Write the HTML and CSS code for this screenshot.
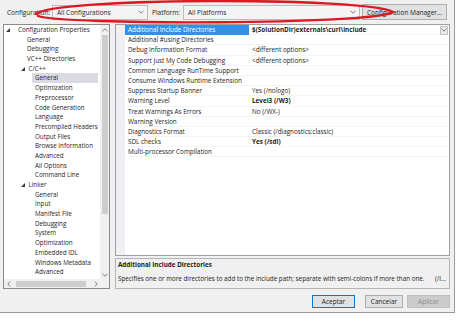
FILE: index.html
```html
<!DOCTYPE html>
<html>
<head>
	<title>Property Pages</title>
	<link rel="stylesheet" href="styles.css">
</head>
<body>
	<div class="dialog">
		<div class="toolbar">
			<span class="label">Configuration:</span>
			<div class="combo combo-config">
				<span>All Configurations</span>
				<svg class="chev" width="6" height="4" viewBox="0 0 6 4"><polyline points="0.5,0.8 3,3.2 5.5,0.8" /></svg>
			</div>
			<span class="label label-platform">Platform:</span>
			<div class="combo combo-platform">
				<span>All Platforms</span>
				<svg class="chev" width="6" height="4" viewBox="0 0 6 4"><polyline points="0.5,0.8 3,3.2 5.5,0.8" /></svg>
			</div>
			<button class="btn btn-manager">Configuration Manager...</button>
		</div>

		<div class="main">
			<div class="tree">
				<ul class="tree-list">
					<li class="lvl0"><svg class="exp" width="4" height="4" viewBox="0 0 4 4"><polygon points="4,0 4,4 0,4" /></svg>Configuration Properties</li>
					<li class="lvl1">General</li>
					<li class="lvl1">Debugging</li>
					<li class="lvl1">VC++ Directories</li>
					<li class="lvl1p"><svg class="exp" width="4" height="4" viewBox="0 0 4 4"><polygon points="4,0 4,4 0,4" /></svg>C/C++</li>
					<li class="lvl2 selected">General</li>
					<li class="lvl2">Optimization</li>
					<li class="lvl2">Preprocessor</li>
					<li class="lvl2">Code Generation</li>
					<li class="lvl2">Language</li>
					<li class="lvl2">Precompiled Headers</li>
					<li class="lvl2">Output Files</li>
					<li class="lvl2">Browse Information</li>
					<li class="lvl2">Advanced</li>
					<li class="lvl2">All Options</li>
					<li class="lvl2">Command Line</li>
					<li class="lvl1p"><svg class="exp" width="4" height="4" viewBox="0 0 4 4"><polygon points="4,0 4,4 0,4" /></svg>Linker</li>
					<li class="lvl2">General</li>
					<li class="lvl2">Input</li>
					<li class="lvl2">Manifest File</li>
					<li class="lvl2">Debugging</li>
					<li class="lvl2">System</li>
					<li class="lvl2">Optimization</li>
					<li class="lvl2">Embedded IDL</li>
					<li class="lvl2">Windows Metadata</li>
					<li class="lvl2">Advanced</li>
				</ul>
				<div class="vscroll">
					<div class="arrow"><svg width="6" height="4" viewBox="0 0 6 4"><polyline points="0.5,3.2 3,0.8 5.5,3.2" /></svg></div>
					<div class="vthumb"></div>
					<div class="spacer"></div>
					<div class="arrow"><svg width="6" height="4" viewBox="0 0 6 4"><polyline points="0.5,0.8 3,3.2 5.5,0.8" /></svg></div>
				</div>
				<div class="hscroll">
					<div class="arrow"><svg width="4" height="6" viewBox="0 0 4 6"><polyline points="3.2,0.5 0.8,3 3.2,5.5" /></svg></div>
					<div class="hthumb"></div>
					<div class="spacer"></div>
					<div class="arrow"><svg width="4" height="6" viewBox="0 0 4 6"><polyline points="0.8,0.5 3.2,3 0.8,5.5" /></svg></div>
				</div>
				<div class="corner"></div>
			</div>

			<div class="right">
				<div class="grid">
					<div class="gutter"></div>
					<div class="rows">
						<div class="row selected">
							<span class="name">Additional Include Directories</span>
							<span class="value bold">$(SolutionDir)externals\curl\include</span>
							<span class="drop"><svg width="6" height="4" viewBox="0 0 6 4"><polyline points="0.5,0.8 3,3.2 5.5,0.8" /></svg></span>
						</div>
						<div class="row"><span class="name">Additional #using Directories</span><span class="value"></span></div>
						<div class="row"><span class="name">Debug Information Format</span><span class="value">&lt;different options&gt;</span></div>
						<div class="row"><span class="name">Support Just My Code Debugging</span><span class="value">&lt;different options&gt;</span></div>
						<div class="row"><span class="name">Common Language RunTime Support</span><span class="value"></span></div>
						<div class="row"><span class="name">Consume Windows Runtime Extension</span><span class="value"></span></div>
						<div class="row"><span class="name">Suppress Startup Banner</span><span class="value">Yes (/nologo)</span></div>
						<div class="row"><span class="name">Warning Level</span><span class="value bold">Level3 (/W3)</span></div>
						<div class="row"><span class="name">Treat Warnings As Errors</span><span class="value">No (/WX-)</span></div>
						<div class="row"><span class="name">Warning Version</span><span class="value"></span></div>
						<div class="row"><span class="name">Diagnostics Format</span><span class="value">Classic (/diagnostics:classic)</span></div>
						<div class="row"><span class="name">SDL checks</span><span class="value bold">Yes (/sdl)</span></div>
						<div class="row"><span class="name">Multi-processor Compilation</span><span class="value"></span></div>
					</div>
				</div>
				<div class="desc">
					<div class="desc-title">Additional Include Directories</div>
					<div class="desc-text">
						<span>Specifies one or more directories to add to the include path; separate with semi-colons if more than one.</span>
						<span>(/I...</span>
					</div>
				</div>
			</div>
		</div>

		<div class="buttons">
			<button class="btn btn-ok">Aceptar</button>
			<button class="btn btn-cancel">Cancelar</button>
			<button class="btn btn-apply" disabled>Aplicar</button>
		</div>

		<svg class="highlight" width="455" height="30" viewBox="0 0 455 30">
			<path d="M36 14 C 55 -3, 370 -3, 393 12 C 375 25, 60 25, 38 16" />
		</svg>
	</div>
</body>
</html>
```

FILE: styles.css
```css
body {
	margin: 0;
	background-color: #fff;
	font-family: "Open Sans", "Noto Sans", sans-serif;
	font-size: 6.5px;
	color: #1e1e1e;
}

.dialog {
	position: relative;
	width: 455px;
	height: 313px;
	box-sizing: border-box;
	background-color: #f0f0f0;
	border-right: 1px solid #9a9a9a;
	border-bottom: 1px solid #9a9a9a;
	display: flex;
	flex-direction: column;
}

/* top bar */
.toolbar {
	height: 24px;
	display: flex;
	align-items: center;
	padding-left: 7px;
}

.label {
	width: 45px;
	white-space: nowrap;
}

.label-platform {
	width: 31px;
	margin-left: 4px;
}

.combo {
	height: 15px;
	box-sizing: border-box;
	display: flex;
	align-items: center;
	justify-content: space-between;
	padding: 0 3px 0 4px;
	background-color: #f4f4f4;
	border: 1px solid #bcbcbc;
}

.combo-config {
	width: 96px;
}

.combo-platform {
	width: 177px;
}

.chev polyline,
.arrow polyline,
.drop polyline {
	fill: none;
	stroke: #707070;
	stroke-width: 0.9;
}

.btn {
	font-family: inherit;
	font-size: 6.5px;
	color: #1e1e1e;
	height: 14px;
	padding: 0;
	background-color: #e1e1e1;
	border: 1px solid #adadad;
}

.btn-manager {
	margin-left: 2px;
	width: 85px;
	height: 16px;
}

/* tree + grid */
.main {
	height: 265px;
	display: flex;
	padding-left: 3px;
}

.tree {
	width: 107px;
	box-sizing: border-box;
	background-color: #fff;
	border: 1px solid #8c8c8c;
	display: grid;
	grid-template-columns: 1fr 9px;
	grid-template-rows: 1fr 9px;
	font-size: 6.25px;
}

.tree-list {
	list-style: none;
	margin: 0;
	padding: 0;
	overflow: hidden;
}

.tree-list li {
	height: 9.7px;
	line-height: 9.7px;
	white-space: nowrap;
}

.exp {
	display: inline-block;
	vertical-align: middle;
	margin-top: -1px;
}

.exp polygon {
	fill: #3a3a3a;
}

.lvl0 {
	padding-left: 2px;
}

.lvl0 .exp {
	margin-right: 8px;
}

.lvl1 {
	padding-left: 23px;
}

.lvl1p {
	padding-left: 16.5px;
}

.lvl1p .exp {
	margin-right: 4px;
}

.lvl2 {
	margin: 0 2px 0 27.5px;
	padding-left: 3.5px;
}

.tree-list .selected {
	background-color: #dadae3;
}

.vscroll {
	background-color: #f0f0f0;
	display: flex;
	flex-direction: column;
}

.hscroll {
	background-color: #f0f0f0;
	display: flex;
}

.arrow {
	height: 9px;
	width: 9px;
	display: flex;
	align-items: center;
	justify-content: center;
}

.vthumb {
	margin: 1px 1.5px 0;
	height: 179px;
	background-color: #cdcdcd;
}

.hthumb {
	margin: 1.5px 0 1.5px 3px;
	width: 70px;
	background-color: #cdcdcd;
}

.spacer {
	flex: 1;
}

.corner {
	background-color: #f0f0f0;
}

.right {
	width: 335px;
	margin-left: 5px;
	display: flex;
	flex-direction: column;
	gap: 2px;
}

.grid {
	height: 232px;
	box-sizing: border-box;
	background-color: #fff;
	border: 1px solid #a0a0a0;
	display: flex;
	font-size: 6.35px;
}

.gutter {
	width: 9px;
	background-color: #eff0f4;
}

.rows {
	flex: 1;
}

.row {
	height: 10.2px;
	line-height: 10.2px;
	display: flex;
	box-shadow: inset 0 -1px #f4f4f4;
	white-space: nowrap;
}

.name {
	width: 124px;
	box-sizing: border-box;
	padding-left: 3px;
	overflow: hidden;
}

.row.selected .name {
	background-color: #3390ea;
	color: #fff;
}

.value {
	flex: 1;
	padding-left: 3px;
}

.bold {
	font-weight: bold;
}

.drop {
	width: 8px;
	height: 9px;
	margin: 0.5px 1px 0 0;
	box-sizing: border-box;
	background-color: #ececec;
	border: 1px solid #c4c4c4;
	display: flex;
	align-items: center;
	justify-content: center;
}

.desc {
	flex: 1;
	box-sizing: border-box;
	padding: 1px 3px 0 2px;
	border: 1px solid #b4b4b4;
	font-size: 6.3px;
}

.desc-title {
	line-height: 10px;
	font-weight: bold;
}

.desc-text {
	margin-top: 4px;
	line-height: 10px;
	display: flex;
	justify-content: space-between;
	white-space: nowrap;
}

/* dialog buttons */
.buttons {
	display: flex;
	justify-content: flex-end;
	padding: 6px 4px 0 0;
}

.btn-ok {
	width: 43px;
	height: 13px;
	border-color: #0078d7;
	margin-right: 10px;
}

.btn-cancel {
	width: 38px;
	height: 13px;
	margin-right: 4px;
}

.btn-apply {
	width: 43px;
	height: 13px;
	background-color: #cccccc;
	border-color: #bfbfbf;
	color: #8a8a8a;
}

/* red marker drawn over the top bar */
.highlight {
	position: absolute;
	left: 0;
	top: 0;
	pointer-events: none;
}

.highlight path {
	fill: none;
	stroke: #dc1821;
	stroke-width: 2.4;
	stroke-linecap: round;
}
```
